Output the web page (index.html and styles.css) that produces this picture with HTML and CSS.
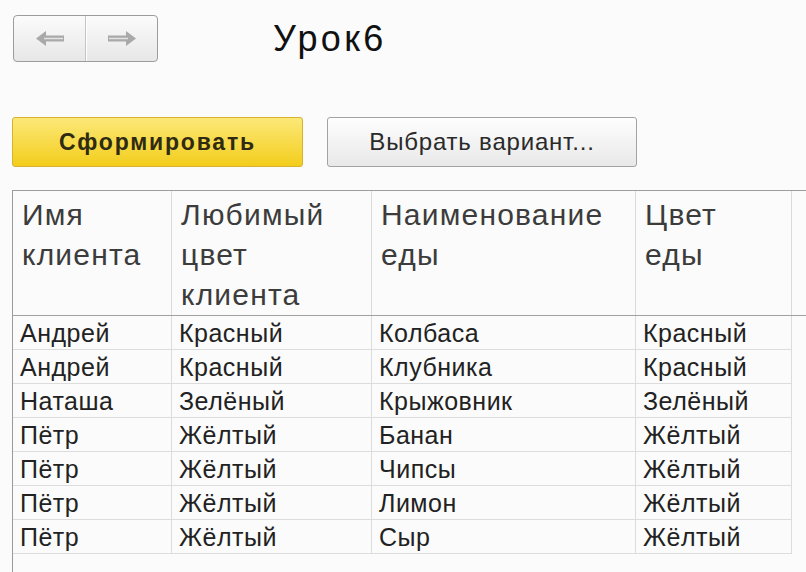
FILE: index.html
```html
<!DOCTYPE html>
<html lang="ru">
<head>
<meta charset="utf-8">
<title>Урок6</title>
<link rel="stylesheet" href="styles.css">
</head>
<body>
<div class="page">
  <div class="topbar">
    <div class="nav">
      <button class="nav-btn" type="button" aria-label="Назад">
        <svg width="28" height="15" viewBox="0 0 28 15"><path d="M0 7.5 L10 0 L10 4.5 L28 4.5 L28 10.5 L10 10.5 L10 15 Z" fill="#a9a9a9"/><path d="M8 7.5 H27" stroke="#e4e4e4" stroke-width="1.4"/></svg>
      </button>
      <button class="nav-btn" type="button" aria-label="Вперёд">
        <svg width="28" height="15" viewBox="0 0 28 15"><path d="M28 7.5 L18 0 L18 4.5 L0 4.5 L0 10.5 L18 10.5 L18 15 Z" fill="#a9a9a9"/><path d="M1 7.5 H20" stroke="#e4e4e4" stroke-width="1.4"/></svg>
      </button>
    </div>
    <h1 class="title">Урок6</h1>
  </div>
  <div class="actions">
    <button class="btn btn-primary" type="button">Сформировать</button>
    <button class="btn btn-default" type="button">Выбрать вариант...</button>
  </div>
  <div class="report">
    <div class="report-head">
      <div class="grid">
        <div class="hcell">Имя клиента</div>
        <div class="hcell">Любимый цвет клиента</div>
        <div class="hcell">Наименование еды</div>
        <div class="hcell">Цвет еды</div>
      </div>
    </div>
    <div class="grid body">
      <div class="cell">Андрей</div><div class="cell">Красный</div><div class="cell">Колбаса</div><div class="cell">Красный</div>
      <div class="cell">Андрей</div><div class="cell">Красный</div><div class="cell">Клубника</div><div class="cell">Красный</div>
      <div class="cell">Наташа</div><div class="cell">Зелёный</div><div class="cell">Крыжовник</div><div class="cell">Зелёный</div>
      <div class="cell">Пётр</div><div class="cell">Жёлтый</div><div class="cell">Банан</div><div class="cell">Жёлтый</div>
      <div class="cell">Пётр</div><div class="cell">Жёлтый</div><div class="cell">Чипсы</div><div class="cell">Жёлтый</div>
      <div class="cell">Пётр</div><div class="cell">Жёлтый</div><div class="cell">Лимон</div><div class="cell">Жёлтый</div>
      <div class="cell">Пётр</div><div class="cell">Жёлтый</div><div class="cell">Сыр</div><div class="cell">Жёлтый</div>
    </div>
  </div>
</div>
</body>
</html>
```

FILE: styles.css
```css
* { box-sizing: border-box; }
html, body { margin: 0; padding: 0; }
body {
  background: #fbfbfb;
  font-family: "Liberation Sans", Arial, sans-serif;
  color: #222;
  width: 806px;
  height: 572px;
  overflow: hidden;
}
.page { padding-top: 15px; }
.topbar {
  display: flex;
  align-items: flex-start;
  padding-left: 13px;
}
.nav {
  display: flex;
  width: 145px;
  height: 47px;
  border: 1px solid #9c9c9c;
  border-radius: 4px;
  background: linear-gradient(#fbfbfb, #e7e7e7);
  overflow: hidden;
}
.nav-btn {
  flex: 1;
  border: 0;
  margin: 0;
  padding: 0;
  background: transparent;
  display: flex;
  align-items: center;
  justify-content: center;
}
.nav-btn + .nav-btn { border-left: 1px solid #c4c4c4; box-shadow: inset 1px 0 0 #fff; }
.title {
  margin: 0 0 0 115px;
  font-weight: normal;
  font-size: 36px;
  letter-spacing: 3.3px;
  line-height: 47px;
  color: #111;
}
.actions {
  display: flex;
  gap: 24px;
  margin-top: 55px;
  padding-left: 12px;
}
.btn {
  height: 50px;
  margin: 0;
  padding: 0;
  border-radius: 3px;
  font-family: "Liberation Sans", Arial, sans-serif;
}
.btn-primary {
  width: 291px;
  border: 1px solid #d6b22e;
  background: linear-gradient(#fce878, #f3cd1c);
  font-weight: bold;
  font-size: 23px;
  letter-spacing: 1.8px;
  color: #2f2a12;
}
.btn-default {
  width: 310px;
  border: 1px solid #a3a3a3;
  background: linear-gradient(#fefefe, #e8e8e8);
  font-size: 24px;
  letter-spacing: 0.8px;
  color: #2a2a2a;
}
.report {
  margin-top: 23px;
  margin-left: 12px;
  border-left: 1px solid #9a9a9a;
  height: 400px;
}
.report-head {
  border-top: 1px solid #9d9d9d;
  border-bottom: 1px solid #a0a0a0;
}
.grid {
  display: grid;
  grid-template-columns: 159px 200px 264px 156px;
  width: 779px;
}
.hcell {
  height: 124px;
  border-right: 1px solid #dadada;
  padding: 4px 20px 0 9px;
  font-size: 30px;
  line-height: 40px;
  letter-spacing: 1.2px;
  color: #3c3c3c;
}
.cell {
  height: 34px;
  border-right: 1px solid #dcdcdc;
  border-bottom: 1px solid #dcdcdc;
  padding: 2px 4px 0 7px;
  font-size: 25px;
  line-height: 31px;
  letter-spacing: 0.5px;
  color: #222;
  white-space: nowrap;
}
```
